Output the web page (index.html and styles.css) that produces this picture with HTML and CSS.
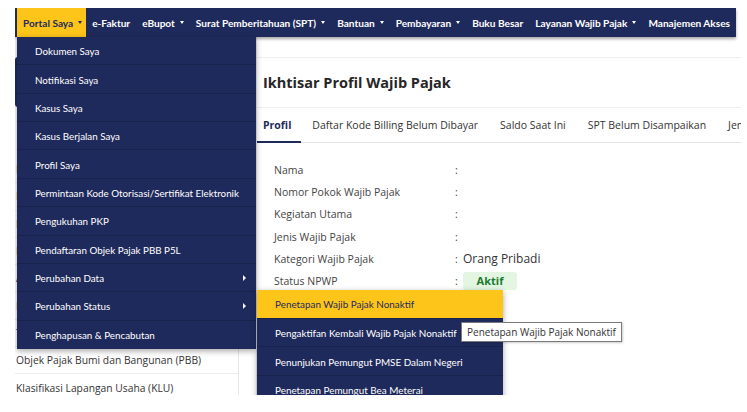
FILE: index.html
```html
<!DOCTYPE html>
<html>
<head>
<meta charset="utf-8">
<link rel="stylesheet" href="styles.css">
</head>
<body>
<div class="app">
  <nav class="navbar">
    <div class="nav-item active">Portal Saya<span class="caret"></span></div>
    <div class="nav-item">e-Faktur</div>
    <div class="nav-item">eBupot<span class="caret"></span></div>
    <div class="nav-item">Surat Pemberitahuan (SPT)<span class="caret"></span></div>
    <div class="nav-item">Bantuan<span class="caret"></span></div>
    <div class="nav-item">Pembayaran<span class="caret"></span></div>
    <div class="nav-item">Buku Besar</div>
    <div class="nav-item">Layanan Wajib Pajak<span class="caret"></span></div>
    <div class="nav-item">Manajemen Akses</div>
  </nav>

  <div class="layout">
    <aside class="sidebar">
      <div class="side-card"></div>
      <ul class="side-list">
        <li>Informasi Umum</li>
        <li>Detail Kontak</li>
        <li>Pihak Terkait</li>
        <li>Data Unit Keluarga</li>
        <li>Alamat</li>
        <li>Rekening Bank</li>
        <li>Tempat Kegiatan Usaha</li>
        <li>Objek Pajak Bumi dan Bangunan (PBB)</li>
        <li>Klasifikasi Lapangan Usaha (KLU)</li>
      </ul>
    </aside>

    <main class="main">
      <div class="main-head">
        <h1>Ikhtisar Profil Wajib Pajak</h1>
      </div>
      <div class="tabs">
        <div class="tab active">Profil</div>
        <div class="tab">Daftar Kode Billing Belum Dibayar</div>
        <div class="tab">Saldo Saat Ini</div>
        <div class="tab">SPT Belum Disampaikan</div>
        <div class="tab">Jenis Pajak</div>
      </div>
      <div class="profile">
        <div class="row"><span class="label">Nama</span><span class="colon">:</span><span class="value"></span></div>
        <div class="row"><span class="label">Nomor Pokok Wajib Pajak</span><span class="colon">:</span><span class="value"></span></div>
        <div class="row"><span class="label">Kegiatan Utama</span><span class="colon">:</span><span class="value"></span></div>
        <div class="row"><span class="label">Jenis Wajib Pajak</span><span class="colon">:</span><span class="value"></span></div>
        <div class="row"><span class="label">Kategori Wajib Pajak</span><span class="colon">:</span><span class="value">Orang Pribadi</span></div>
        <div class="row"><span class="label">Status NPWP</span><span class="colon">:</span><span class="value"><span class="badge">Aktif</span></span></div>
        <div class="row"><span class="label">Status PKP</span><span class="colon">:</span><span class="value"></span></div>
        <div class="row"><span class="label">Tanggal Pendaftaran</span><span class="colon">:</span><span class="value"></span></div>
      </div>
    </main>
  </div>

  <ul class="dropdown">
    <li>Dokumen Saya</li>
    <li>Notifikasi Saya</li>
    <li>Kasus Saya</li>
    <li>Kasus Berjalan Saya</li>
    <li>Profil Saya</li>
    <li>Permintaan Kode Otorisasi/Sertifikat Elektronik</li>
    <li>Pengukuhan PKP</li>
    <li>Pendaftaran Objek Pajak PBB P5L</li>
    <li class="has-sub">Perubahan Data</li>
    <li class="has-sub">Perubahan Status</li>
    <li>Penghapusan &amp; Pencabutan</li>
  </ul>

  <ul class="submenu">
    <li class="hover">Penetapan Wajib Pajak Nonaktif</li>
    <li>Pengaktifan Kembali Wajib Pajak Nonaktif</li>
    <li>Penunjukan Pemungut PMSE Dalam Negeri</li>
    <li>Penetapan Pemungut Bea Meterai</li>
  </ul>

  <div class="tooltip">Penetapan Wajib Pajak Nonaktif</div>
</div>
</body>
</html>
```

FILE: styles.css
```css
* { box-sizing: border-box; }
html, body { margin: 0; padding: 0; background: #fff; }
body { font-family: "Open Sans", "Noto Sans", sans-serif; color: #333; }

.app {
  position: relative;
  margin: 8px 0 0 15px;
  width: 726px;
  height: 387px;
  overflow: hidden;
}

.navbar {
  position: relative;
  z-index: 2;
  width: 721px;
  height: 29px;
  background: #1f2a5c;
  display: flex;
  align-items: stretch;
  padding-left: 2px;
  box-shadow: 0 2px 3px rgba(0,0,0,.35);
}
.nav-item {
  display: flex;
  align-items: center;
  padding: 0 6px;
  color: #fff;
  font-family: Lato, "Open Sans", sans-serif;
  font-weight: 700;
  font-size: 10.1px;
  white-space: nowrap;
}
.nav-item.active { background: #fdc51a; color: #1f2a5c; padding-right: 4px; }
.caret {
  display: inline-block;
  margin-left: 5px;
  width: 0; height: 0;
  border-left: 2.5px solid transparent;
  border-right: 2.5px solid transparent;
  border-top: 3px solid currentColor;
}

.layout { display: flex; height: 358px; }

.sidebar { flex: 0 0 241px; width: 241px; padding-right: 17px; padding-top: 20px; }
.side-card { height: 50px; background: #1f2a5c; border-radius: 3px; }
.side-list {
  list-style: none; margin: 49px 0 0; padding: 0;
  border-right: 1px solid #e6e6e6;
}
.side-list li {
  height: 27.3px;
  display: flex; align-items: center;
  padding-left: 1px;
  font-size: 10.3px; color: #333;
  border-bottom: 1px solid #ececec;
  white-space: nowrap;
}

.main { flex: 1; min-width: 0; overflow: hidden; border-left: 1px solid #e8e8e8; padding-top: 20px; }
.main-head {
  height: 51px;
  border-top: 1px solid #eeeeee;
  border-bottom: 1px solid #eeeeee;
  display: flex; align-items: center;
  padding-left: 6px;
}
.main-head h1 { margin: 0; font-size: 14.5px; font-weight: 700; color: #262626; }

.tabs {
  display: flex; height: 35px;
  border-bottom: 1px solid #e3e3e3;
  white-space: nowrap;
}
.tab {
  display: flex; align-items: center;
  padding: 0 11px;
  font-size: 10.5px; color: #333;
}
.tab.active {
  padding-left: 6px; padding-right: 10px;
  font-weight: 700; color: #1f2a5c;
  border-bottom: 2px solid #1f2a5c;
  margin-bottom: -1px;
}

.profile { padding: 16px 0 0 17px; }
.row { display: flex; align-items: center; height: 22.2px; font-size: 10.5px; }
.label { width: 181px; flex: 0 0 181px; color: #444; }
.colon { width: 8px; flex: 0 0 8px; color: #444; }
.value { font-size: 12px; color: #333; }
.badge {
  display: inline-block;
  width: 54px; height: 18px; line-height: 18px;
  text-align: center;
  background: #e2f6e2; color: #1e7a2e;
  font-weight: 700; font-size: 11px;
  border-radius: 3px;
}

.dropdown, .submenu {
  position: absolute;
  list-style: none; margin: 0; padding: 0;
  background: #1f2a5c;
  box-shadow: 0 2px 6px rgba(0,0,0,.35);
  z-index: 5;
  font-family: Lato, "Open Sans", sans-serif;
}
.dropdown { left: 2px; top: 29px; width: 239px; }
.dropdown li, .submenu li {
  position: relative;
  height: 28.36px;
  display: flex; align-items: center;
  padding: 1px 0 0 18px;
  color: #fff; font-size: 9.8px;
  border-bottom: 1px solid #19224d;
  white-space: nowrap;
}
.dropdown li:last-child { border-bottom: none; }
.has-sub::after {
  content: "";
  position: absolute; right: 10px; top: 50%;
  margin-top: -3px;
  border-top: 3px solid transparent;
  border-bottom: 3px solid transparent;
  border-left: 3px solid #fff;
}
.submenu { left: 242px; top: 282px; width: 246px; }
.submenu li { height: 28.7px; font-size: 9.9px; }
.submenu li.hover { background: #fdc51a; color: #1f2a5c; }

.tooltip {
  position: absolute; z-index: 6;
  left: 446px; top: 314px;
  height: 20px; line-height: 18px;
  padding: 0 5px;
  background: #fff; color: #333;
  border: 1px solid #7a7a7a;
  font-size: 10px;
  white-space: nowrap;
  box-shadow: 1px 1px 2px rgba(0,0,0,.2);
}
```
